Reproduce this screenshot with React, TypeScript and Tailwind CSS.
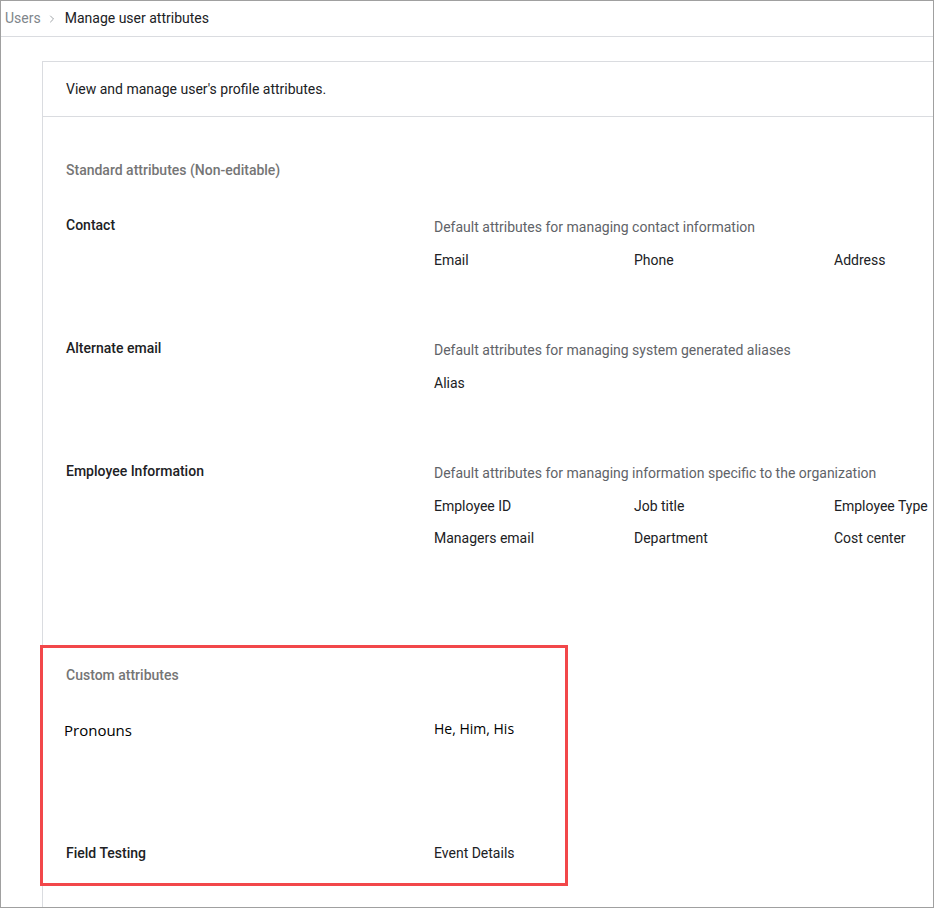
import { ChevronRight } from "lucide-react";

const sections = [
  {
    label: "Contact",
    desc: "Default attributes for managing contact information",
    items: ["Email", "Phone", "Address"],
  },
  {
    label: "Alternate email",
    desc: "Default attributes for managing system generated aliases",
    items: ["Alias"],
  },
  {
    label: "Employee Information",
    desc: "Default attributes for managing information specific to the organization",
    items: ["Employee ID", "Job title", "Employee Type", "Managers email", "Department", "Cost center"],
  },
];

export default function App() {
  return (
    <div
      className="relative w-[934px] h-[908px] overflow-hidden bg-white border border-[#a0a0a0] flex flex-col text-[14px] text-[#202124]"
      style={{ fontFamily: "Roboto, 'Liberation Sans', sans-serif" }}
    >
      {/* breadcrumb */}
      <div className="h-[36px] shrink-0 border-b border-[#dadce0] flex items-center pl-[4px]">
        <span className="text-[#80868b]">Users</span>
        <ChevronRight className="w-3 h-3 ml-[5px] mr-[7px] text-[#80868b]" strokeWidth={1.5} />
        <span>Manage user attributes</span>
      </div>

      <div className="flex-1 flex flex-col pl-[41px] pt-[24px]">
        <div className="flex-1 border-l border-t border-[#dadce0] flex flex-col">
          <div className="h-[55px] shrink-0 border-b border-[#dadce0] flex items-center pl-[23px]">
            View and manage user's profile attributes.
          </div>

          <div className="pl-[23px] pt-[43px]">
            <div className="leading-5 font-medium text-[#757575]">Standard attributes (Non-editable)</div>

            <div className="mt-[35px] flex flex-col gap-[68px]">
              {sections.map((s) => (
                <div key={s.label} className="grid grid-cols-[368px_1fr]">
                  <div className="leading-5 font-medium">{s.label}</div>
                  <div className="pt-[2px]">
                    <div className="leading-5 text-[#5f6368]">{s.desc}</div>
                    <div className="mt-[13px] grid grid-cols-[200px_200px_200px] gap-y-[12px]">
                      {s.items.map((it) => (
                        <div key={it} className="leading-5 whitespace-nowrap">{it}</div>
                      ))}
                    </div>
                  </div>
                </div>
              ))}
            </div>

            <div className="mt-[117px] leading-5 font-medium text-[#757575]">Custom attributes</div>

            <div className="mt-[35px] grid grid-cols-[368px_1fr]">
              <div
                className="-ml-[2px] text-[15px] leading-5 text-black"
                style={{ fontFamily: "'Open Sans', 'Noto Sans', sans-serif" }}
              >
                Pronouns
              </div>
              <div
                className="-mt-[1px] text-[14px] leading-5 text-black"
                style={{ fontFamily: "'Open Sans', 'Noto Sans', sans-serif" }}
              >
                He, Him, His
              </div>
            </div>

            <div className="mt-[103px] grid grid-cols-[368px_1fr]">
              <div className="leading-5 font-medium">Field Testing</div>
              <div className="leading-5">Event Details</div>
            </div>
          </div>
        </div>
      </div>

      {/* annotation highlight */}
      <div className="absolute left-[39px] top-[644px] w-[528px] h-[241px] border-[3px] border-[#f2474a] pointer-events-none" />
    </div>
  );
}
